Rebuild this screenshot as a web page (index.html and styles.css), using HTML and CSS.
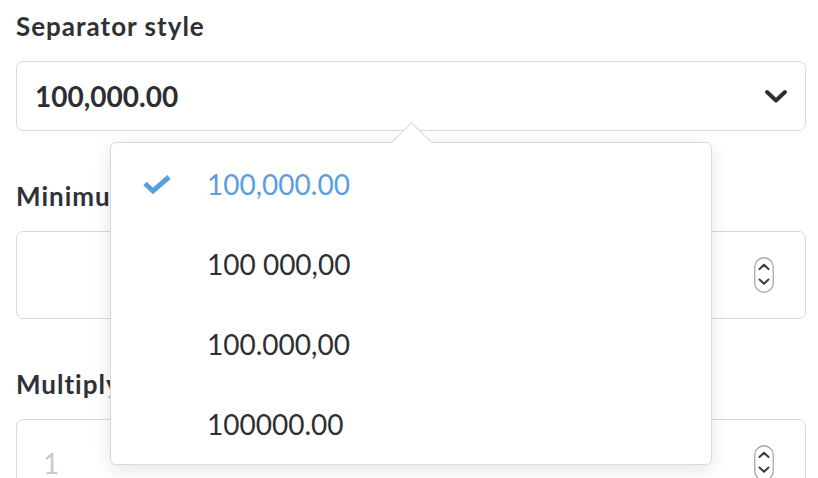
FILE: index.html
```html
<!DOCTYPE html>
<html lang="en">
<head>
<meta charset="utf-8">
<title>Separator style</title>
<link rel="stylesheet" href="styles.css">
</head>
<body>
<div class="form">
  <div class="field">
    <div class="label">Separator style</div>
    <div class="select-wrap">
      <div class="select">
        <span class="value">100,000.00</span>
        <svg class="chevron" width="24" height="15" viewBox="0 0 24 15"><path d="M3 3 L12 11.5 L21 3" fill="none" stroke="#2b2f35" stroke-width="4" stroke-linecap="round" stroke-linejoin="round"/></svg>
      </div>
      <div class="popup">
        <ul class="options">
          <li class="option selected">
            <span class="check"><svg width="31" height="25" viewBox="0 0 31 25"><path d="M4 11.5 L12 19 L28 5" fill="none" stroke="#5a9de0" stroke-width="5" stroke-linejoin="miter"/></svg></span>
            <span class="opt-text">100,000.00</span>
          </li>
          <li class="option"><span class="check"></span><span class="opt-text">100 000,00</span></li>
          <li class="option"><span class="check"></span><span class="opt-text">100.000,00</span></li>
          <li class="option"><span class="check"></span><span class="opt-text">100000.00</span></li>
        </ul>
      </div>
    </div>
  </div>
  <div class="field">
    <div class="label">Minimum fraction digits</div>
    <div class="input">
      <span class="placeholder"></span>
      <svg class="spinner" width="20" height="36" viewBox="0 0 20 36"><rect x="0.75" y="0.75" width="18.5" height="34.5" rx="9.25" fill="#fff" stroke="#a5a8ac" stroke-width="1.3"/><path d="M5.5 12 L10 7.8 L14.5 12" fill="none" stroke="#3a3d42" stroke-width="2" stroke-linecap="round" stroke-linejoin="round"/><path d="M5.5 22.5 L10 26.7 L14.5 22.5" fill="none" stroke="#3a3d42" stroke-width="2" stroke-linecap="round" stroke-linejoin="round"/></svg>
    </div>
  </div>
  <div class="field">
    <div class="label">Multiply by</div>
    <div class="input">
      <span class="placeholder">1</span>
      <svg class="spinner" width="20" height="36" viewBox="0 0 20 36"><rect x="0.75" y="0.75" width="18.5" height="34.5" rx="9.25" fill="#fff" stroke="#a5a8ac" stroke-width="1.3"/><path d="M5.5 12 L10 7.8 L14.5 12" fill="none" stroke="#3a3d42" stroke-width="2" stroke-linecap="round" stroke-linejoin="round"/><path d="M5.5 22.5 L10 26.7 L14.5 22.5" fill="none" stroke="#3a3d42" stroke-width="2" stroke-linecap="round" stroke-linejoin="round"/></svg>
    </div>
  </div>
</div>
</body>
</html>
```
FILE: styles.css
```css
html, body {
  margin: 0;
  padding: 0;
  background: #ffffff;
  height: 478px;
  overflow: hidden;
}

body {
  font-family: "Lato", "Liberation Sans", sans-serif;
  color: #2d3035;
}

.form {
  display: flex;
  flex-direction: column;
  gap: 51px;
  padding: 12px 12px 0 16px;
}

.field {
  display: flex;
  flex-direction: column;
  gap: 20px;
}

.label {
  font-size: 26px;
  font-weight: 700;
  line-height: 29px;
  letter-spacing: 1px;
  color: #2e3237;
  white-space: nowrap;
}

.select-wrap {
  position: relative;
}

.select {
  box-sizing: border-box;
  height: 70px;
  border: 1px solid #d6d9dd;
  border-radius: 7px;
  display: flex;
  align-items: center;
  justify-content: space-between;
  padding: 0 18px 0 18px;
  background: #fff;
}

.value {
  font-size: 28px;
  font-weight: 700;
  color: #2b2f34;
}

.chevron {
  display: block;
  margin-right: -1px;
}

.popup {
  position: absolute;
  top: 81px;
  left: 94px;
  width: 600px;
  background: #fff;
  border: 1px solid #d6d9dd;
  border-radius: 6px;
  box-shadow: 0 4px 18px rgba(0, 0, 0, 0.11);
  z-index: 5;
}

.popup::before {
  content: "";
  position: absolute;
  top: -15px;
  left: 286px;
  width: 28px;
  height: 28px;
  background: #fff;
  border-top: 1px solid #d6d9dd;
  border-left: 1px solid #d6d9dd;
  transform: rotate(45deg);
}

.options {
  position: relative;
  list-style: none;
  margin: 0;
  padding: 1px 0 0 0;
}

.option {
  height: 80px;
  display: flex;
  align-items: center;
  padding-left: 30px;
  font-size: 28px;
  font-weight: 400;
  color: #2d3035;
}

.check {
  width: 66px;
  height: 25px;
  display: flex;
  align-items: center;
}

.check svg {
  display: block;
}

.option.selected .opt-text {
  color: #5a9de0;
}

.input {
  box-sizing: border-box;
  height: 88px;
  border: 1px solid #d6d9dd;
  border-radius: 7px;
  display: flex;
  align-items: center;
  justify-content: space-between;
  padding: 0 31px 0 26px;
  background: #fff;
}

.placeholder {
  font-size: 28px;
  color: #c8cbcf;
}

.spinner {
  display: block;
}
```
